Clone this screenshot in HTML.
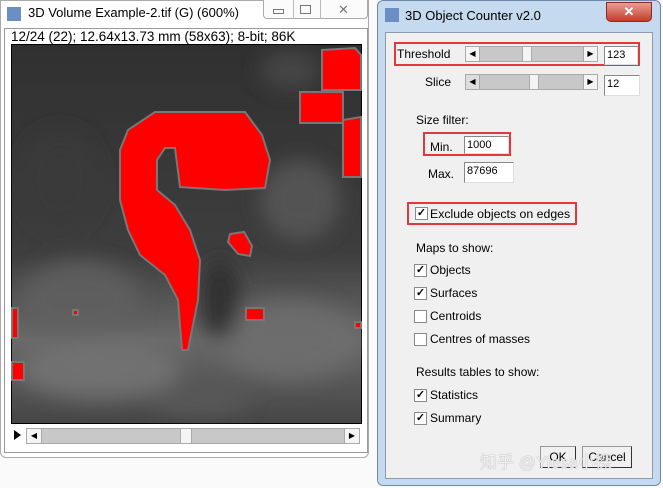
<!DOCTYPE html>
<html><head><meta charset="utf-8"><style>
*{margin:0;padding:0;box-sizing:border-box}
body{width:663px;height:488px;background:#fafafa;position:relative;overflow:hidden;font-family:"Liberation Sans",Arial,sans-serif;font-size:12px;color:#000}
.a{position:absolute}
.cb{position:absolute;width:13px;height:13px;border:1px solid #8a8a8a;background:#fff;font-size:11px;line-height:11px;text-align:center;font-weight:bold}
.lbl{position:absolute;font-size:12px}
.tf{position:absolute;background:#fff;border:1px solid #888;border-right-color:#ddd;border-bottom-color:#ddd;font-size:11px;padding:1px 2px;line-height:15px}
.red{position:absolute;border:2px solid #e03a3e}
</style></head><body>
<div class="a" style="left:0;top:0;width:369px;height:458px;background:#fff;border:1px solid #aaa;border-radius:0 0 6px 6px"></div>
<div class="a" style="left:7px;top:7px;width:14px;height:14px;background:#6b8fc4"></div>
<div class="a" style="left:28px;top:5px;font-size:13px">3D Volume Example-2.tif (G) (600%)</div>
<div class="a" style="left:263px;top:0;width:105px;height:19px;border:1px solid #aaa;border-top:none;border-radius:0 0 4px 4px;background:#fbfbfb"></div>
<div class="a" style="left:293px;top:0;width:1px;height:19px;background:#bbb"></div>
<div class="a" style="left:320px;top:0;width:1px;height:19px;background:#bbb"></div>
<div class="a" style="left:273px;top:9px;width:11px;height:5px;border:1px solid #777"></div>
<div class="a" style="left:300px;top:5px;width:11px;height:9px;border:1px solid #777"></div>
<div class="a" style="left:338px;top:2px;font-size:13px;color:#777">✕</div>
<div class="a" style="left:4px;top:28px;width:364px;height:425px;border:1px solid #999;background:#fff"></div>
<div class="a" style="left:11px;top:29px;font-size:13.5px">12/24 (22); 12.64x13.73 mm (58x63); 8-bit; 86K</div>
<svg class="a" style="left:11px;top:44px" width="351" height="380" viewBox="11 44 351 380">
<defs>
<linearGradient id="g" x1="0" y1="0" x2="0" y2="1"><stop offset="0" stop-color="#303030"/><stop offset="0.55" stop-color="#3e3e3e"/><stop offset="0.78" stop-color="#6a6a6a"/><stop offset="1" stop-color="#454545"/></linearGradient>
<filter id="b"><feGaussianBlur stdDeviation="10"/></filter>
</defs>
<rect x="11" y="44" width="351" height="380" fill="url(#g)" stroke="#000" stroke-width="2"/>
<g filter="url(#b)" opacity="0.85">
<ellipse cx="300" cy="200" rx="40" ry="40" fill="#585858"/>
<ellipse cx="80" cy="300" rx="60" ry="40" fill="#606060"/>
<ellipse cx="100" cy="370" rx="80" ry="30" fill="#747474"/>
<ellipse cx="290" cy="340" rx="70" ry="40" fill="#6e6e6e"/>
<ellipse cx="200" cy="400" rx="50" ry="15" fill="#5a5a5a"/>
<ellipse cx="60" cy="180" rx="40" ry="50" fill="#3a3a3a"/>
<ellipse cx="290" cy="70" rx="30" ry="20" fill="#484848"/>
<ellipse cx="220" cy="300" rx="20" ry="40" fill="#2a2a2a"/>
</g>
<g fill="#f00" stroke="#777" stroke-width="2">
<path d="M155 112 L245 112 L262 135 L270 160 L265 188 L225 190 L180 187 L175 148 L165 148 L157 160 L157 190 L175 205 L190 230 L200 260 L198 300 L192 330 L188 350 L182 350 L178 300 L165 275 L140 255 L128 230 L120 200 L120 150 L128 130 Z"/>
<path d="M322 50 L355 48 L361 55 L361 90 L322 90 Z"/>
<path d="M300 92 L343 92 L343 123 L300 123 Z"/>
<path d="M343 120 L361 117 L361 177 L343 177 Z"/>
<path d="M230 234 L244 232 L252 246 L250 256 L238 254 L228 242 Z"/>
<rect x="246" y="308" width="18" height="12"/>
<rect x="12" y="308" width="6" height="30"/>
<rect x="12" y="362" width="12" height="18"/>
<rect x="73" y="310" width="5" height="5"/>
<rect x="355" y="322" width="6" height="6"/>
</g>
</svg>
<div class="a" style="left:14px;top:430px;width:0;height:0;border-left:7px solid #000;border-top:5px solid transparent;border-bottom:5px solid transparent"></div>
<div class="a" style="left:26px;top:428px;width:334px;height:16px;background:#c8c8c8;border:1px solid #aaa"></div>
<div class="a" style="left:26px;top:428px;width:16px;height:16px;background:#f4f4f4;border:1px solid #aaa;font-size:8px;line-height:14px;text-align:center">◀</div>
<div class="a" style="left:344px;top:428px;width:16px;height:16px;background:#f4f4f4;border:1px solid #aaa;font-size:8px;line-height:14px;text-align:center">▶</div>
<div class="a" style="left:180px;top:428px;width:12px;height:16px;background:#f4f4f4;border:1px solid #aaa"></div>
<div class="a" style="left:377px;top:0;width:284px;height:486px;background:#c5d9ef;border:1px solid #6f87a8;border-radius:6px"></div>
<div class="a" style="left:385px;top:8px;width:14px;height:14px;background:#6b8fc4"></div>
<div class="a" style="left:405px;top:8px;font-size:13px">3D Object Counter v2.0</div>
<div class="a" style="left:606px;top:2px;width:46px;height:20px;background:linear-gradient(#e8a090,#c43c2c);border:1px solid #8a2a20;border-radius:0 0 5px 5px;color:#fff;text-align:center;font-weight:bold;font-size:13px;line-height:18px">✕</div>
<div class="a" style="left:385px;top:32px;width:268px;height:447px;background:#f0f0f0;border:1px solid #8a9ab0"></div>
<div class="red" style="left:394px;top:42px;width:246px;height:24px"></div>
<div class="lbl" style="left:397px;top:47px">Threshold</div>
<div class="a" style="left:465px;top:46px;width:133px;height:16px;background:#c8c8c8;border:1px solid #aaa"></div>
<div class="a" style="left:465px;top:46px;width:15px;height:16px;background:#f4f4f4;border:1px solid #aaa;font-size:8px;line-height:14px;text-align:center">◀</div>
<div class="a" style="left:583px;top:46px;width:15px;height:16px;background:#f4f4f4;border:1px solid #aaa;font-size:8px;line-height:14px;text-align:center">▶</div>
<div class="a" style="left:522px;top:46px;width:10px;height:16px;background:#f4f4f4;border:1px solid #aaa"></div>
<div class="tf" style="left:604px;top:46px;width:34px;height:19px">123</div>
<div class="lbl" style="left:425px;top:75px">Slice</div>
<div class="a" style="left:465px;top:74px;width:133px;height:16px;background:#c8c8c8;border:1px solid #aaa"></div>
<div class="a" style="left:465px;top:74px;width:15px;height:16px;background:#ddd;border:1px solid #aaa;font-size:8px;line-height:14px;text-align:center">◀</div>
<div class="a" style="left:583px;top:74px;width:15px;height:16px;background:#f4f4f4;border:1px solid #aaa;font-size:8px;line-height:14px;text-align:center">▶</div>
<div class="a" style="left:529px;top:74px;width:10px;height:16px;background:#f4f4f4;border:1px solid #aaa"></div>
<div class="tf" style="left:604px;top:75px;width:36px;height:21px">12</div>
<div class="lbl" style="left:416px;top:113px">Size filter:</div>
<div class="red" style="left:423px;top:132px;width:88px;height:24px"></div>
<div class="lbl" style="left:430px;top:140px">Min.</div>
<div class="tf" style="left:464px;top:136px;width:45px;height:18px">1000</div>
<div class="lbl" style="left:428px;top:167px">Max.</div>
<div class="tf" style="left:464px;top:162px;width:50px;height:21px">87696</div>
<div class="red" style="left:407px;top:202px;width:170px;height:23px"></div>
<div class="cb" style="left:415px;top:207px">✓</div><div class="lbl" style="left:430px;top:207px;font-size:12.3px">Exclude objects on edges</div>
<div class="lbl" style="left:416px;top:241px">Maps to show:</div>
<div class="cb" style="left:414px;top:264px">✓</div><div class="lbl" style="left:430px;top:263px">Objects</div>
<div class="cb" style="left:414px;top:287px">✓</div><div class="lbl" style="left:430px;top:286px">Surfaces</div>
<div class="cb" style="left:414px;top:310px"></div><div class="lbl" style="left:430px;top:309px">Centroids</div>
<div class="cb" style="left:414px;top:333px"></div><div class="lbl" style="left:430px;top:332px">Centres of masses</div>
<div class="lbl" style="left:416px;top:365px">Results tables to show:</div>
<div class="cb" style="left:414px;top:389px">✓</div><div class="lbl" style="left:430px;top:388px">Statistics</div>
<div class="cb" style="left:414px;top:412px">✓</div><div class="lbl" style="left:430px;top:411px">Summary</div>
<div class="a" style="left:540px;top:446px;width:36px;height:22px;border:1px solid #999;border-right-color:#333;border-bottom-color:#333;background:#f0f0f0;text-align:center;line-height:20px">OK</div>
<div class="a" style="left:582px;top:446px;width:50px;height:22px;border:1px solid #999;border-right-color:#333;border-bottom-color:#333;background:#f0f0f0;text-align:center;line-height:20px">Cancel</div>
<div class="a" style="left:480px;top:448px;font-size:17px;color:rgba(255,255,255,0.85);font-family:'Liberation Sans','Noto Sans CJK SC',sans-serif;text-shadow:0 0 1px #888">知乎 @Yiesa小探</div>
</body></html>
